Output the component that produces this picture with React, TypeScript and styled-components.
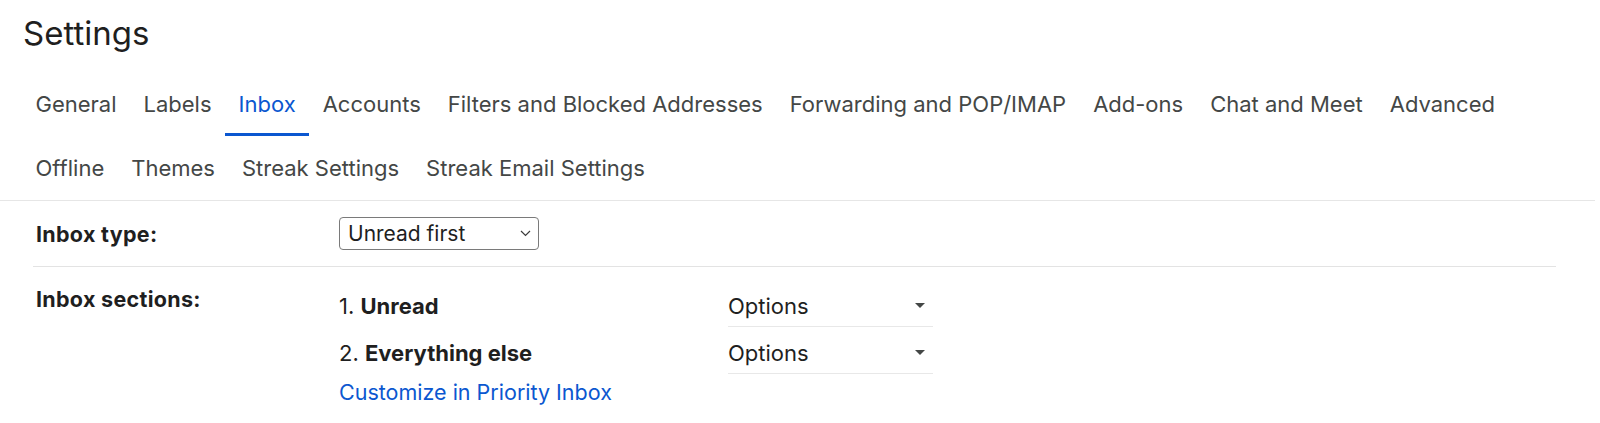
import styled, { createGlobalStyle } from "styled-components";

const GlobalStyle = createGlobalStyle`
	html, body {
		margin: 0;
		padding: 0;
		background: #ffffff;
	}
	body {
		font-family: Inter, "Open Sans", "Liberation Sans", sans-serif;
		color: #1f1f1f;
	}
`;

const Page = styled.div`
	width: 1600px;
	height: 423px;
	overflow: hidden;
	background: #fff;
`;

const Title = styled.h1`
	margin: 0;
	padding: 10px 0 0 23px;
	font-size: 33px;
	font-weight: 400;
	line-height: 46px;
	color: #1f1f1f;
`;

const TabBar = styled.nav`
	margin: 16px 5px 0 0;
	padding-left: 22px;
	border-bottom: 1px solid #e6e6e6;
`;

const TabRow = styled.div`
	display: flex;
`;

const Tab = styled.div<{ $active?: boolean }>`
	padding: 17px 13.5px 14px;
	font-size: 22px;
	line-height: 30px;
	white-space: nowrap;
	cursor: pointer;
	color: ${p => (p.$active ? "#0b57d0" : "#444746")};
	border-bottom: 3px solid ${p => (p.$active ? "#0b57d0" : "transparent")};
`;

const Content = styled.div`
	margin: 0 44px 0 33px;
`;

const Row = styled.div<{ $top?: boolean }>`
	display: grid;
	grid-template-columns: 306px 1fr;
	align-items: ${p => (p.$top ? "start" : "center")};
	padding: ${p => (p.$top ? "18px 0 12px" : "16px 0")};
	border-bottom: ${p => (p.$top ? "none" : "1px solid #e3e3e3")};
`;

const Label = styled.div`
	padding-left: 3px;
	font-size: 21.5px;
	font-weight: 700;
	letter-spacing: 0.3px;
	line-height: 28px;
	color: #1f1f1f;
`;

const SelectBox = styled.div`
	box-sizing: border-box;
	width: 200px;
	height: 33px;
	display: flex;
	align-items: center;
	justify-content: space-between;
	padding: 0 7px 0 8px;
	border: 1px solid #7a7a7a;
	border-radius: 4px;
	font-size: 21px;
	color: #1f1f1f;
	cursor: pointer;
`;

const Sections = styled.div`
	display: flex;
	flex-direction: column;
`;

const SectionRow = styled.div`
	display: flex;
	align-items: center;
	& + & {
		margin-top: 5px;
	}
`;

const SectionName = styled.div`
	width: 389px;
	box-sizing: border-box;
	font-size: 22px;
	line-height: 28px;
	color: #1f1f1f;
	b {
		font-weight: 700;
	}
`;

const OptionsDrop = styled.div`
	box-sizing: border-box;
	width: 205px;
	height: 42px;
	display: flex;
	align-items: center;
	justify-content: space-between;
	padding: 0 8px 0 0;
	border-bottom: 1px solid #e8e8e8;
	font-size: 22px;
	line-height: 28px;
	color: #1f1f1f;
	cursor: pointer;
`;

const CustomizeLink = styled.a`
	display: block;
	margin-top: 4px;
	font-size: 21.5px;
	line-height: 28px;
	color: #0b57d0;
	text-decoration: none;
	cursor: pointer;
`;

const tabRows = [
	["General", "Labels", "Inbox", "Accounts", "Filters and Blocked Addresses", "Forwarding and POP/IMAP", "Add-ons", "Chat and Meet", "Advanced"],
	["Offline", "Themes", "Streak Settings", "Streak Email Settings"],
];

const sections = ["Unread", "Everything else"];

const Chevron = () => (
	<svg width="11" height="7" viewBox="0 0 11 7">
		<path d="M1 1l4.5 4.5L10 1" fill="none" stroke="#3c3c3c" strokeWidth="1.2" />
	</svg>
);

const Caret = () => (
	<svg width="10" height="5" viewBox="0 0 10 5">
		<path d="M0 0h10L5 5z" fill="#444746" />
	</svg>
);

const App = () => {
	return (
		<Page>
			<GlobalStyle />
			<Title>Settings</Title>
			<TabBar>
				{tabRows.map((row, i) => (
					<TabRow key={i}>
						{row.map(name => (
							<Tab key={name} $active={name === "Inbox"}>
								{name}
							</Tab>
						))}
					</TabRow>
				))}
			</TabBar>
			<Content>
				<Row>
					<Label>Inbox type:</Label>
					<SelectBox>
						<span>Unread first</span>
						<Chevron />
					</SelectBox>
				</Row>
				<Row $top>
					<Label>Inbox sections:</Label>
					<div>
						<Sections>
							{sections.map((s, i) => (
								<SectionRow key={s}>
									<SectionName>
										{i + 1}. <b>{s}</b>
									</SectionName>
									<OptionsDrop>
										<span>Options</span>
										<Caret />
									</OptionsDrop>
								</SectionRow>
							))}
						</Sections>
						<CustomizeLink>Customize in Priority Inbox</CustomizeLink>
					</div>
				</Row>
			</Content>
		</Page>
	);
};

export default App;
